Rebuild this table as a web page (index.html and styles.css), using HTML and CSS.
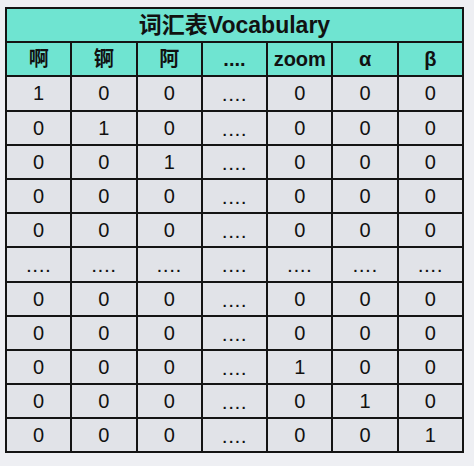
FILE: index.html
```html
<!DOCTYPE html>
<html lang="zh">
<head>
<meta charset="utf-8">
<title>词汇表Vocabulary</title>
<link rel="stylesheet" href="styles.css">
</head>
<body>
<table class="vocab">
  <thead>
    <tr><th class="title" colspan="7">词汇表Vocabulary</th></tr>
    <tr class="head"><th>啊</th><th>锕</th><th>阿</th><th>....</th><th>zoom</th><th>α</th><th>β</th></tr>
  </thead>
  <tbody>
    <tr><td>1</td><td>0</td><td>0</td><td class="dots">....</td><td>0</td><td>0</td><td>0</td></tr>
    <tr><td>0</td><td>1</td><td>0</td><td class="dots">....</td><td>0</td><td>0</td><td>0</td></tr>
    <tr><td>0</td><td>0</td><td>1</td><td class="dots">....</td><td>0</td><td>0</td><td>0</td></tr>
    <tr><td>0</td><td>0</td><td>0</td><td class="dots">....</td><td>0</td><td>0</td><td>0</td></tr>
    <tr><td>0</td><td>0</td><td>0</td><td class="dots">....</td><td>0</td><td>0</td><td>0</td></tr>
    <tr><td class="dots">....</td><td class="dots">....</td><td class="dots">....</td><td class="dots">....</td><td class="dots">....</td><td class="dots">....</td><td class="dots">....</td></tr>
    <tr><td>0</td><td>0</td><td>0</td><td class="dots">....</td><td>0</td><td>0</td><td>0</td></tr>
    <tr><td>0</td><td>0</td><td>0</td><td class="dots">....</td><td>0</td><td>0</td><td>0</td></tr>
    <tr><td>0</td><td>0</td><td>0</td><td class="dots">....</td><td>1</td><td>0</td><td>0</td></tr>
    <tr><td>0</td><td>0</td><td>0</td><td class="dots">....</td><td>0</td><td>1</td><td>0</td></tr>
    <tr><td>0</td><td>0</td><td>0</td><td class="dots">....</td><td>0</td><td>0</td><td>1</td></tr>
  </tbody>
</table>
</body>
</html>
```
FILE: styles.css
```css
html, body {
  margin: 0;
  padding: 0;
  background: #eeeff3;
}
body {
  padding: 7px 0 0 5px;
  font-family: "Liberation Sans", "Noto Sans CJK SC", Arial, sans-serif;
  color: #111;
}
.vocab {
  width: 459px;
  table-layout: fixed;
  border-collapse: separate;
  border-spacing: 2px;
  background: #141414;
}
.vocab tr {
  height: 32.2px;
}
.vocab th,
.vocab td {
  padding: 0;
  text-align: center;
  vertical-align: middle;
  line-height: 22px;
}
.vocab th {
  background: #6fe4d1;
  font-weight: bold;
  font-size: 20px;
}
.vocab th.title {
  font-size: 23px;
}
.vocab td {
  background: #e1e3e8;
  font-size: 20px;
}
.vocab td.dots {
  font-size: 21px;
  letter-spacing: 0.5px;
  padding-top: 2px;
}
```
